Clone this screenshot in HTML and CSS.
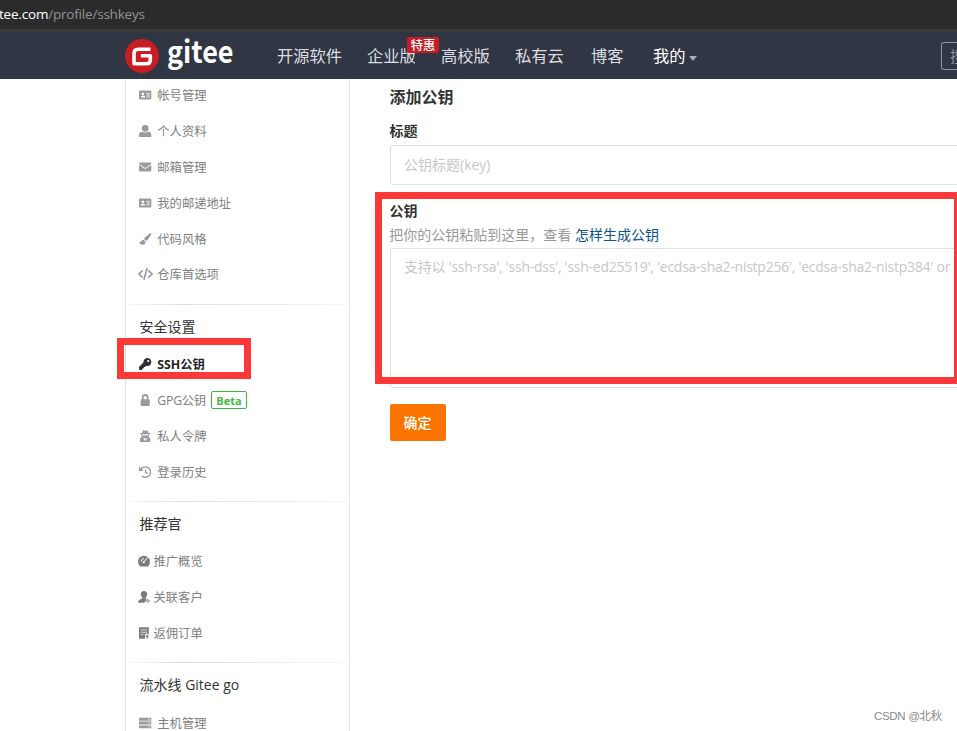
FILE: index.html
```html
<!DOCTYPE html>
<html lang="zh-CN">
<head>
<meta charset="utf-8">
<title>SSH公钥</title>
<link rel="stylesheet" href="styles.css">
</head>
<body>
<div class="page">
  <div class="address"><span class="host">tee.com</span>/profile/sshkeys</div>
  <header class="nav">
    <a class="logo">
      <svg width="110" height="46" viewBox="0 -3 110 46">
        <circle cx="17" cy="20" r="17" fill="#c71d23"/>
        <path d="M25.5 13.3H13.2Q9 13.3 9 17.5V27.7H21.5Q25.3 27.7 25.3 24V19.7H15.800" fill="none" stroke="#fff" stroke-width="3.600" stroke-linejoin="round"/>
        <text class="wordmark" x="42" y="27" textLength="66.500" lengthAdjust="spacingAndGlyphs">gitee</text>
      </svg>
    </a>
    <nav class="links">
      <a class="w1">开源软件</a>
      <a class="w2">企业版<span class="promo">特惠</span></a>
      <a class="w3">高校版</a>
      <a class="w4">私有云</a>
      <a class="w5">博客</a>
      <a class="mine">我的<i class="caret"></i></a>
    </nav>
    <div class="search">搜</div>
  </header>
  <main class="body">
    <aside class="side">
      <ul class="menu">
        <li><svg class="ic" viewBox="0 0 12 12"><path fill-rule="evenodd" d="M1 1.500h10.500q.8 0 .8.8v7.400q0 .8-.8.8H.8q-.8 0-.8-.8V2.300q0-.8.8-.8zM3.900 3.500a1.300 1.300 0 1 0 .01 0zM1.700 8.500h4.500q0-1.800-1.500-1.800h-1.500q-1.500 0-1.500 1.800zM7.300 4h3.500v.8H7.300zM7.300 5.700h3.500v.8H7.300zM7.300 7.400h3.500v.8H7.300z"/></svg>帐号管理</li>
        <li><svg class="ic" viewBox="0 0 12 12"><circle cx="6.200" cy="3.300" r="3.400"/><path d="M3.200 6.800q3 1.300 6 0Q12.300 7 12.300 10v1q0 1-1 1H1q-1 0-1-1v-1q0-3 3.200-3.200z"/></svg>个人资料</li>
        <li><svg class="ic" viewBox="0 0 12 12"><path d="M0 2.500q0-1 1-1h10.300q1 0 1 1v.4L6.200 7 0 2.900zM0 4l6.200 4.100L12.300 4v5.500q0 1-1 1H1q-1 0-1-1z"/></svg>邮箱管理</li>
        <li><svg class="ic" viewBox="0 0 12 12"><path fill-rule="evenodd" d="M1 1.500h10.500q.8 0 .8.8v7.400q0 .8-.8.8H.8q-.8 0-.8-.8V2.300q0-.8.8-.8zM3.900 3.500a1.300 1.300 0 1 0 .01 0zM1.700 8.500h4.500q0-1.800-1.500-1.800h-1.500q-1.500 0-1.500 1.800zM7.300 4h3.500v.8H7.300zM7.300 5.700h3.500v.8H7.300zM7.300 7.400h3.500v.8H7.300z"/></svg>我的邮递地址</li>
        <li><svg class="ic" viewBox="0 0 12 12"><path d="M11.900.2q.8.5.2 1.500L8.300 7.200Q7.500 8 6.800 7.500L5.300 6.200Q4.900 5.700 5.500 5L10.600.4q.6-.5 1.300-.2zM4.600 6.800l1.800 1.600q.3 3.300-3 3.300-2.500 0-3.200-2.800 1.300.5 1.800-.5.7-1.600 2.600-1.600z"/></svg>代码风格</li>
        <li><svg class="ic wide" viewBox="0 0 15 12"><path d="M4.200 2.800L1 6l3.200 3.200M10.800 2.800L14 6l-3.200 3.200M8.900.7L6.100 11.300" fill="none" stroke="currentColor" stroke-width="1.700" stroke-linecap="round"/></svg>仓库首选项</li>
      </ul>
      <hr class="rule">
      <h3 class="group">安全设置</h3>
      <ul class="menu">
        <li class="active"><svg class="ic" viewBox="0 0 12 12"><path fill-rule="evenodd" d="M8.200 0a4 4 0 1 1-1.100 7.800L6.100 8.900H4.900V10.300H3.500V12H.7Q0 12 0 11.300V8.900L4.400 4.500A4 4 0 0 1 8.200 0zM9.200 1.900a1.100 1.100 0 1 0 .01 0z"/></svg>SSH公钥</li>
        <li><svg class="ic" viewBox="0 0 12 12"><path fill-rule="evenodd" d="M2.800 5.300V3.400a3.400 3.400 0 0 1 6.800 0v1.900q1.200 0 1.200 1.100v4.500q0 1.100-1.100 1.100h-7Q1.600 12 1.600 10.900V6.400q0-1.100 1.200-1.100zM4.600 5.300h3.200V3.500a1.600 1.600 0 0 0-3.200 0z"/></svg><span class="gpg">GPG公钥</span><span class="beta">Beta</span></li>
        <li><svg class="ic" viewBox="0 0 12 12"><path fill-rule="evenodd" d="M4 .2l2.200.5L8.400.2l1 2.700h2v1h-1.200v1.600L9.300 7l2 1v4H1.100V8l2-1-.9-1.500V3.900H1v-1h2zM3.300 4.300v1.200h2.300l.4-.8h.4l.4.800h2.300V4.300zM4.300 7.900l1.200 3 .7-1.600.7 1.600 1.200-3-1.900.5z"/></svg>私人令牌</li>
        <li><svg class="ic" viewBox="0 0 12 12"><path d="M1.500 4.100A5.200 5.200 0 1 1 2.800 10M.6 1v3.400H4M6.600 3.200v3.100l2.100 1.500" fill="none" stroke="currentColor" stroke-width="1.400"/></svg>登录历史</li>
      </ul>
      <hr class="rule">
      <h3 class="group">推荐官</h3>
      <ul class="menu tight">
        <li><svg class="ic" viewBox="0 0 12 12"><path d="M2 11.500Q0 9.800 0 6.500A6 5.800 0 0 1 12 6.500Q12 9.800 10.200 11.500z"/><path d="M5.600 7.400L9.700 2.300M3 6.500q.3-2.400 2.900-3.100" fill="none" stroke="#fff" stroke-width="1"/><circle cx="5.700" cy="7.300" r="1" fill="#fff"/></svg>推广概览</li>
        <li><svg class="ic" viewBox="0 0 12 12"><ellipse cx="6" cy="3.300" rx="3.200" ry="3.400"/><path d="M4.300 5.500h3.500v2l1 .6L6.300 11.800H0Q0 8.700 4.300 7.500z"/><path d="M7.600 10.700l2.700-2.600M9.200 11.600l2.500-2.300" fill="none" stroke="#999" stroke-width="1.300"/></svg>关联客户</li>
        <li><svg class="ic" viewBox="0 0 12 12"><path d="M1 .3h9.800v6.500H7v5H1z"/><path d="M2.700 3h6.300M2.700 5.300h6.300M2.700 7.600h3" stroke="#fff" stroke-width=".7"/><path d="M7.800 7.500l1.400 1.400 1.400-1.400M9.200 8.800v3M7.700 9.700h3" fill="none" stroke="currentColor"/></svg>返佣订单</li>
      </ul>
      <hr class="rule">
      <h3 class="group">流水线 Gitee go</h3>
      <ul class="menu">
        <li><svg class="ic" viewBox="0 0 12 12"><path fill-rule="evenodd" d="M0 .8h12.300v2.900H0zM0 4.600h12.300v2.900H0zM0 8.400h12.300v2.900H0zM9.300 1.900v.8h1.500v-.8zM9.300 5.700v.8h1.500v-.8zM9.300 9.500v.8h1.500v-.8z"/></svg>主机管理</li>
      </ul>
    </aside>
    <section class="content">
      <h2 class="title">添加公钥</h2>
      <label class="label">标题</label>
      <input class="field" placeholder="公钥标题(key)">
      <label class="label keylabel">公钥</label>
      <p class="hint">把你的公钥粘贴到这里，查看 <a>怎样生成公钥</a></p>
      <textarea class="field area" placeholder="支持以 'ssh-rsa', 'ssh-dss', 'ssh-ed25519', 'ecdsa-sha2-nistp256', 'ecdsa-sha2-nistp384' or"></textarea>
      <button class="submit">确定</button>
    </section>
  </main>
  <div class="mark mark-menu"></div>
  <div class="mark mark-form"></div>
  <div class="watermark">CSDN @北秋</div>
</div>
</body>
</html>
```

FILE: styles.css
```css
* { box-sizing: border-box; }
body { margin: 0; background: #fff; font-family: "Open Sans", "Noto Sans CJK SC", sans-serif; color: #333; }
.page { position: relative; width: 957px; height: 731px; overflow: hidden; display: flex; flex-direction: column; }
.address { flex: none; height: 32px; line-height: 29px; background: #2b2b2b; border-bottom: 3px solid #3a3a3a; color: #939393; font-size: 13.5px; letter-spacing: -.2px; white-space: nowrap; text-indent: -1px; }
.host { color: #fff; }
.nav { flex: none; height: 47px; background: #303643; display: flex; align-items: center; padding-left: 125px; color: #dcdde0; font-size: 16.3px; }
.logo { width: 152px; height: 46px; margin-top: 1px; }
.logo svg { display: block; }
.wordmark { font: 700 30px "Noto Sans CJK SC", sans-serif; fill: #fff; }
.links { display: flex; line-height: 24px; white-space: nowrap; flex: 1; }
.w1 { width: 90px; }
.w2 { width: 74px; position: relative; }
.w3 { width: 74px; }
.w4 { width: 76px; }
.w5 { width: 62px; }
.mine { color: #fff; display: flex; align-items: center; }
.caret { border: 4.5px solid transparent; border-top: 5px solid #a9acb3; border-bottom: 0; margin: 5px 0 0 3px; }
.promo { position: absolute; left: 40px; top: -7px; width: 32px; height: 16px; background: #c71d23; border-radius: 2px; color: #fff; font-size: 12.3px; font-weight: 500; line-height: 17px; text-align: center; }
.search { flex: none; width: 16px; height: 28px; border: 1px solid #8b93a5; border-right: 0; border-radius: 3px 0 0 3px; padding-left: 8px; line-height: 26px; font-size: 15px; color: #8d929e; overflow: hidden; }
.body { flex: 1; display: flex; min-height: 0; }
.side { flex: none; width: 225px; margin-left: 125px; border: solid #e3e3e5; border-width: 0 1px; overflow: hidden; }
.menu { list-style: none; margin: 0; padding: 0 0 0 13px; color: #808080; font-size: 12.3px; }
.menu:first-child { margin-top: -1.5px; }
.menu li { height: 35.8px; display: flex; align-items: center; white-space: nowrap; }
.ic { flex: none; width: 12px; height: 12px; margin-right: 6.3px; overflow: visible; fill: #9b9b9b; color: #9b9b9b; }
.wide { width: 15px; margin: 0 4.3px 0 -1px; }
.tight .ic { width: 12px; height: 12px; margin: 0 3.5px 0 -1px; fill: #7c7c7c; color: #7c7c7c; }
.menu .active { color: #222; font-weight: 700; }
.active .ic { fill: #303030; }
.gpg { width: 48px; letter-spacing: -.25px; }
.beta { height: 18px; line-height: 17px; width: 36px; margin-left: 5.7px; border: 1px solid #3cb83c; border-radius: 2px; color: #45b648; font-size: 11px; font-weight: 700; text-align: center; }
.rule { height: 1px; border: 0; margin: 11.4px 1px 0; background: linear-gradient(90deg, #f8f8f8, #dedede 25%, #eee 75%, #f8f8f8); }
.group { margin: 0; padding: 2px 0 0 13.5px; height: 41.6px; line-height: 40px; font-size: 14px; font-weight: 400; }
.content { flex: 1; min-width: 0; margin-left: 40px; display: flex; flex-direction: column; align-items: flex-start; }
.title { margin: 5px 0 1px -.5px; font-size: 16px; line-height: 24px; font-weight: 600; font-family: "Noto Sans CJK SC", sans-serif; }
.label { font-size: 14px; line-height: 20px; font-weight: 700; margin: 12px 0 0 -.5px; }
.field { display: block; flex: none; width: 600px; height: 40px; margin: 4px 0 0; padding: 0 13px 2px; border: 1px solid #dedfe7; border-radius: 3px; font: 14px "Open Sans", "Noto Sans CJK SC", sans-serif; background: #fff; }
.field::placeholder { color: #c7c7c7; opacity: 1; }
.keylabel { margin-top: 16px; }
.hint { margin: 4px 0 0 -.7px; font-size: 14px; line-height: 20px; color: #999; }
.hint a { color: #0d5489; }
.area { height: 140px; margin-top: 3px; padding-top: 8px; line-height: 20px; resize: none; white-space: pre; overflow: hidden; letter-spacing: -.26px; }
.submit { width: 56px; height: 37px; margin-top: 16px; padding: 0 1px 1px 0; border: 0; border-radius: 2px; background: #fa7500; color: #fff; font: 500 14px "Noto Sans CJK SC", sans-serif; }
.mark { position: absolute; border: 7px solid #fc3838; }
.mark-menu { left: 117px; top: 338px; width: 134px; height: 41px; }
.mark-form { left: 375px; top: 192px; width: 586px; height: 192px; }
.watermark { position: absolute; right: 15px; top: 708px; font: 11.5px/16px "Liberation Sans", "Noto Sans CJK SC", sans-serif; letter-spacing: -.3px; color: #8a8a8a; }
```
